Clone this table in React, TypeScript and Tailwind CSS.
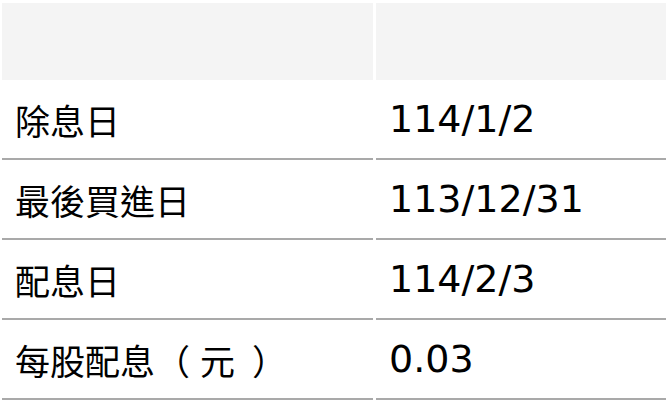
const rows = [
  { label: ['除息日'], value: '114/1/2' },
  { label: ['最後買進日'], value: '113/12/31' },
  { label: ['配息日'], value: '114/2/3' },
  { label: ['每股配息', '（', '元', '）'], value: '0.03' },
];

const cell = 'h-[80px] flex items-center pl-[13px] border-b-2 border-[#a9a9a9] leading-none';

export default function App() {
  return (
    <div className="w-[670px] h-[403px] bg-white text-black font-['DejaVu_Sans','Noto_Sans_CJK_TC',sans-serif]">
      <div className="ml-[2px] mt-[3px] w-[664px] grid grid-cols-[371px_290px] gap-x-[3px]">
        <div className="h-[77px] bg-[#f4f4f4]" />
        <div className="h-[77px] bg-[#f4f4f4]" />
        {rows.map((row) => [
          <div key={row.value + 'a'} className={`${cell} text-[35px] font-['Noto_Sans_CJK_TC',sans-serif]`}>
            {row.label.length === 1 ? (
              row.label[0]
            ) : (
              <>
                <span>{row.label[0]}</span>
                <span>{row.label[1]}</span>
                <span className="ml-[10px]">{row.label[2]}</span>
                <span className="ml-[17px]">{row.label[3]}</span>
              </>
            )}
          </div>,
          <div key={row.value + 'b'} className={`${cell} text-[38px]`}>
            {row.value}
          </div>,
        ])}
      </div>
    </div>
  );
}
